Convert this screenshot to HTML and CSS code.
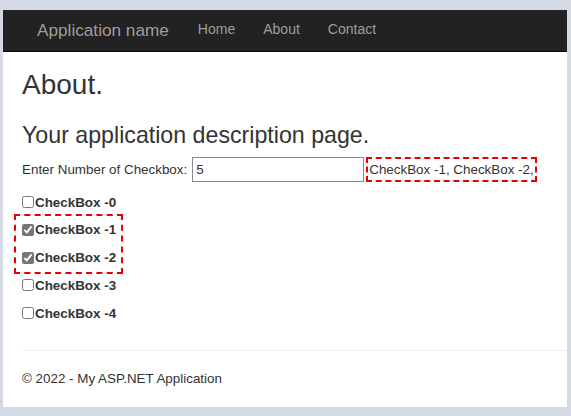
FILE: index.html
```html
<!DOCTYPE html>
<html lang="en">
<head>
<meta charset="utf-8">
<title>About - My ASP.NET Application</title>
<link rel="stylesheet" href="styles.css">
</head>
<body>
<div class="window">
  <nav class="navbar">
    <a class="brand" href="#">Application name</a>
    <ul class="nav">
      <li><a href="#">Home</a></li>
      <li><a href="#">About</a></li>
      <li><a href="#">Contact</a></li>
    </ul>
  </nav>
  <main class="content">
    <h2 class="title">About.</h2>
    <h3 class="subtitle">Your application description page.</h3>
    <div class="entry">
      <label for="count">Enter Number of Checkbox:</label>
      <input class="num" id="count" type="text" value="5">
      <span class="result marked">CheckBox -1, CheckBox -2,</span>
    </div>
    <div class="list">
      <div class="row"><input type="checkbox" id="c0"><label for="c0">CheckBox -0</label></div>
      <div class="group marked">
        <div class="row"><input type="checkbox" id="c1" checked><label for="c1">CheckBox -1</label></div>
        <div class="row"><input type="checkbox" id="c2" checked><label for="c2">CheckBox -2</label></div>
      </div>
      <div class="row"><input type="checkbox" id="c3"><label for="c3">CheckBox -3</label></div>
      <div class="row"><input type="checkbox" id="c4"><label for="c4">CheckBox -4</label></div>
    </div>
    <hr class="rule">
    <footer class="footer">© 2022 - My ASP.NET Application</footer>
  </main>
</div>
</body>
</html>
```

FILE: styles.css
```css
html, body {
  margin: 0;
  padding: 0;
}

body {
  background: #d3dae3;
  padding: 10px 4px 9px 3px;
  font-family: "Liberation Sans", Arial, sans-serif;
  font-size: 13.4px;
  color: #333;
}

.window {
  background: #fff;
  height: 397px;
  overflow: hidden;
}

.navbar {
  height: 41px;
  background: #222;
  border-bottom: 1px solid #080808;
  display: flex;
  align-items: center;
}

.brand {
  color: #9d9d9d;
  text-decoration: none;
  font-size: 17.2px;
  margin-left: 34px;
  margin-right: 15px;
}

.nav {
  list-style: none;
  margin: 0 0 3px;
  padding: 0;
  display: flex;
}

.nav a {
  display: block;
  color: #9d9d9d;
  text-decoration: none;
  font-size: 14px;
  padding: 0 14px;
}

.content {
  padding-left: 19px;
}

.title {
  font-size: 28px;
  font-weight: 500;
  line-height: 1.1;
  margin: 18px 0 0;
}

.subtitle {
  font-size: 23.2px;
  font-weight: 500;
  line-height: 1.1;
  margin: 22px 0 0;
}

.entry {
  display: flex;
  align-items: center;
  margin-top: 9px;
  height: 25px;
}

.entry label {
  margin-right: 5px;
}

.num {
  box-sizing: border-box;
  width: 172px;
  height: 25px;
  border: 1px solid #8a8a8a;
  padding: 0 3px;
  margin: 0 2px 0 0;
  font-family: inherit;
  font-size: 13.4px;
  color: #333;
}

.marked {
  border: 2px dashed #e60000;
}

.result {
  box-sizing: border-box;
  height: 25px;
  line-height: 21px;
  padding: 0 1px;
}

.list {
  margin-top: 6px;
}

.row {
  height: 27.75px;
  display: flex;
  align-items: center;
}

.row input {
  width: 12px;
  height: 12px;
  margin: 0 1px 0 0;
  accent-color: #767676;
}

.row label {
  font-weight: bold;
}

.group {
  width: fit-content;
  margin: -2px 0 -2px -8px;
  padding: 0 5px 0 6px;
}

.rule {
  border: 0;
  border-top: 1px solid #eee;
  margin: 23px 0 0;
}

.footer {
  margin-top: 20px;
}
```
